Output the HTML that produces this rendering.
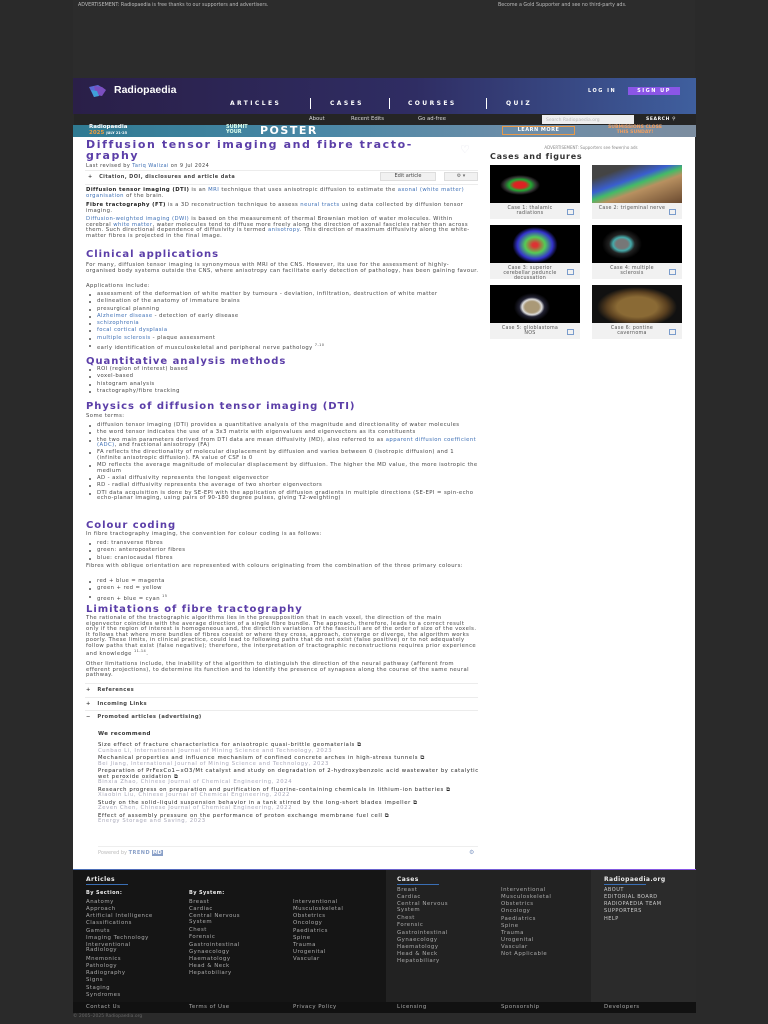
<!DOCTYPE html>
<html><head><meta charset="utf-8">
<style>
*{margin:0;padding:0;box-sizing:border-box}
body{width:768px;height:1024px;background:#2a2a2a;font-family:"DejaVu Sans","Liberation Sans",sans-serif;position:relative;overflow:hidden;color:#333}
.a{position:absolute}
.t{font-size:5.3px;line-height:5.5px;color:#444;letter-spacing:.42px}
.t a,.lk{color:#3d6fb5;text-decoration:none}
h2{position:absolute;left:86px;font-size:10px;font-weight:bold;color:#5b3ea8;letter-spacing:.95px;line-height:11px}
ul{list-style:none}
ul li{position:relative;padding-left:11px;margin-bottom:1.8px}
ul li:before{content:"";position:absolute;left:3px;top:2px;width:2px;height:2px;background:#555;border-radius:1px}
.thumb{position:absolute;width:90px;background:#f1f1f1}
.thumb .img{height:38px;background:#111}
.thumb .cap{font-size:4.8px;line-height:5.2px;color:#555;text-align:center;padding:3px 16px 0 6px;height:16px;position:relative;letter-spacing:.3px}
.thumb .cap:after{content:"";position:absolute;right:6px;top:6px;width:5px;height:4px;border:1px solid #7a9ccc}
.fh{font-size:6px;font-weight:bold;color:#eee;position:absolute;letter-spacing:.4px}
.ful{position:absolute;height:1px;background:#3a6fb5;width:42px}
.fl{position:absolute;font-size:5.4px;line-height:7.15px;color:#aaa;letter-spacing:.5px}
.coll{position:absolute;left:86px;font-size:5.2px;font-weight:bold;color:#444;letter-spacing:.4px}
.hr{position:absolute;left:85px;width:393px;height:1px;background:#ececec}
.rec{font-size:5.3px;line-height:5.5px;color:#222;margin-bottom:1px;letter-spacing:.6px}
.rec i{font-style:normal;color:#aab;display:block;margin-bottom:2px}
</style></head><body>
<div class="a" style="left:73px;top:0;width:622px;height:78px;background:#2c2c2c"></div>
<div class="a" style="left:78px;top:3px;font-size:4.8px;color:#bbb">ADVERTISEMENT: Radiopaedia is free thanks to our supporters and advertisers.</div>
<div class="a" style="left:498px;top:3px;font-size:4.8px;color:#bbb">Become a Gold Supporter and see no third-party ads.</div>
<div class="a" style="left:73px;top:78px;width:623px;height:36px;background:linear-gradient(90deg,#2a1f48,#2f2d63 55%,#3f5f9e)"></div>
<svg class="a" style="left:88px;top:84px" width="24" height="14" viewBox="0 0 24 14"><path d="M1 3l9-2 5 3-2 7-7 2z" fill="#5a6ad6"/><path d="M6 2l8 1 4 3-4 6-6-1z" fill="#7b4fc0"/><path d="M3 6l6 1 2 5-5 1z" fill="#3fa0d8"/></svg>
<div class="a" style="left:114px;top:84px;font-size:10.5px;font-weight:bold;color:#fff;font-family:'Liberation Sans',sans-serif">Radiopaedia</div>
<div class="a" style="left:588px;top:88px;font-size:5px;letter-spacing:1.5px;color:#fff;font-weight:bold">LOG IN</div>
<div class="a" style="left:628px;top:87px;width:52px;height:8px;background:#8a56e6;font-size:5px;letter-spacing:1.5px;color:#fff;font-weight:bold;text-align:center;line-height:8px">SIGN UP</div>
<div class="a" style="left:230px;top:100px;font-size:6px;letter-spacing:2.4px;color:#fff;font-weight:bold">ARTICLES</div>
<div class="a" style="left:310px;top:98px;width:1px;height:11px;background:#fff"></div>
<div class="a" style="left:330px;top:100px;font-size:6px;letter-spacing:2.4px;color:#fff;font-weight:bold">CASES</div>
<div class="a" style="left:389px;top:98px;width:1px;height:11px;background:#fff"></div>
<div class="a" style="left:408px;top:100px;font-size:6px;letter-spacing:2.4px;color:#fff;font-weight:bold">COURSES</div>
<div class="a" style="left:486px;top:98px;width:1px;height:11px;background:#fff"></div>
<div class="a" style="left:506px;top:100px;font-size:6px;letter-spacing:2.4px;color:#fff;font-weight:bold">QUIZ</div>
<div class="a" style="left:74px;top:114px;width:622px;height:11px;background:#252525"></div>
<div class="a" style="left:309px;top:116px;font-size:5.3px;color:#ddd">About</div>
<div class="a" style="left:351px;top:116px;font-size:5.3px;color:#ddd">Recent Edits</div>
<div class="a" style="left:418px;top:116px;font-size:5.3px;color:#ddd">Go ad-free</div>
<div class="a" style="left:542px;top:115px;width:92px;height:9px;background:#eee;font-size:4.5px;color:#bbb;padding:2.5px 4px">Search Radiopaedia.org</div>
<div class="a" style="left:646px;top:117px;font-size:4.5px;font-weight:bold;color:#fff;letter-spacing:.6px">SEARCH &#9906;</div>
<div class="a" style="left:73px;top:125px;width:623px;height:12px;background:linear-gradient(90deg,#2f7a92,#4a88a6 40%,#6b8da8 70%,#7c8da0)"></div>
<div class="a" style="left:89px;top:125px;font-size:5.5px;font-weight:bold;color:#fff;line-height:5.5px">Radiopaedia<br><span style="color:#f0a040">2025</span> <span style="font-size:3.5px">JULY 21-25</span></div>
<div class="a" style="left:226px;top:125px;font-size:5px;font-weight:bold;color:#dfe;line-height:4.6px">SUBMIT<br>YOUR</div>
<div class="a" style="left:260px;top:124px;font-size:11px;font-weight:bold;color:#fff;letter-spacing:1.5px">POSTER</div>
<div class="a" style="left:502px;top:126px;width:73px;height:9px;border:1px solid #e89a4a;font-size:5px;font-weight:bold;color:#fff;text-align:center;line-height:7px;letter-spacing:.5px">LEARN MORE</div>
<div class="a" style="left:582px;top:126px;width:106px;font-size:4.6px;font-weight:bold;color:#f4a060;text-align:center;line-height:4.8px">SUBMISSIONS CLOSE<br>THIS SUNDAY!</div>
<div class="a" style="left:73px;top:137px;width:622px;height:733px;background:#fff"></div>
<div class="a" style="left:86px;top:140px;width:380px;font-size:11px;line-height:10.5px;font-weight:bold;color:#5b3ea8;letter-spacing:1.6px;white-space:nowrap">Diffusion tensor imaging and fibre tracto-<br>graphy</div>
<div class="a" style="left:460px;top:143px;width:16px;height:10px;color:#e6e6ee;font-size:11px">&#9825;</div>
<div class="a t" style="left:86px;top:164px;font-size:5px">Last revised by <a>Tariq Walizai</a> on 9 Jul 2024</div>
<div class="hr" style="top:170px"></div>
<div class="a t" style="left:88px;top:175px;font-size:5px;font-weight:bold">+ &nbsp; Citation, DOI, disclosures and article data</div>
<div class="a" style="left:380px;top:172px;width:56px;height:9px;background:#f1f1f1;border:1px solid #ddd;font-size:5px;color:#444;text-align:center;line-height:7px">Edit article</div>
<div class="a" style="left:444px;top:172px;width:34px;height:9px;background:#f1f1f1;border:1px solid #ddd;font-size:5px;color:#666;text-align:center;line-height:7px">&#9881; &#9662;</div>
<div class="hr" style="top:184px"></div>

<div class="a t" style="left:86px;top:188px;width:393px"><b style="color:#222">Diffusion tensor imaging (DTI)</b> is an <a>MRI</a> technique that uses anisotropic diffusion to estimate the <a>axonal (white matter) organisation</a> of the brain.</div>
<div class="a t" style="left:86px;top:203px;width:393px"><b style="color:#222">Fibre tractography (FT)</b> is a 3D reconstruction technique to assess <a>neural tracts</a> using data collected by diffusion tensor imaging.</div>
<div class="a t" style="left:86px;top:217px;width:393px"><a>Diffusion-weighted imaging (DWI)</a> is based on the measurement of thermal Brownian motion of water molecules. Within cerebral <a>white matter</a>, water molecules tend to diffuse more freely along the direction of axonal fascicles rather than across them. Such directional dependence of diffusivity is termed <a>anisotropy</a>. This direction of maximum diffusivity along the white-matter fibres is projected in the final image.</div>

<h2 style="top:249px">Clinical applications</h2>
<div class="a t" style="left:86px;top:263px;width:393px">For many, diffusion tensor imaging is synonymous with MRI of the CNS. However, its use for the assessment of highly-organised body systems outside the CNS, where anisotropy can facilitate early detection of pathology, has been gaining favour.</div>
<div class="a t" style="left:86px;top:284px">Applications include:</div>
<ul class="a t" style="left:86px;top:292px;width:393px">
<li>assessment of the deformation of white matter by tumours - deviation, infiltration, destruction of white matter</li>
<li>delineation of the anatomy of immature brains</li>
<li>presurgical planning</li>
<li><a>Alzheimer disease</a> - detection of early disease</li>
<li><a>schizophrenia</a></li>
<li><a>focal cortical dysplasia</a></li>
<li><a>multiple sclerosis</a> - plaque assessment</li>
<li>early identification of musculoskeletal and peripheral nerve pathology <sup style="font-size:3.5px">7-10</sup></li>
</ul>
<h2 style="top:356px">Quantitative analysis methods</h2>
<ul class="a t" style="left:86px;top:367px;width:393px">
<li>ROI (region of interest) based</li><li>voxel-based</li><li>histogram analysis</li><li>tractography/fibre tracking</li>
</ul>
<h2 style="top:401px">Physics of diffusion tensor imaging (DTI)</h2>
<div class="a t" style="left:86px;top:414px">Some terms:</div>
<ul class="a t" style="left:86px;top:423px;width:393px">
<li>diffusion tensor imaging (DTI) provides a quantitative analysis of the magnitude and directionality of water molecules</li>
<li>the word tensor indicates the use of a 3x3 matrix with eigenvalues and eigenvectors as its constituents</li>
<li>the two main parameters derived from DTI data are mean diffusivity (MD), also referred to as <a>apparent diffusion coefficient (ADC)</a>, and fractional anisotropy (FA)</li>
<li>FA reflects the directionality of molecular displacement by diffusion and varies between 0 (isotropic diffusion) and 1 (infinite anisotropic diffusion). FA value of CSF is 0</li>
<li>MD reflects the average magnitude of molecular displacement by diffusion. The higher the MD value, the more isotropic the medium</li>
<li>AD - axial diffusivity represents the longest eigenvector</li>
<li>RD - radial diffusivity represents the average of two shorter eigenvectors</li>
<li>DTI data acquisition is done by SE-EPI with the application of diffusion gradients in multiple directions (SE-EPI = spin-echo echo-planar imaging, using pairs of 90-180 degree pulses, giving T2-weighting)</li>
</ul>
<h2 style="top:520px">Colour coding</h2>
<div class="a t" style="left:86px;top:532px">In fibre tractography imaging, the convention for colour coding is as follows:</div>
<ul class="a t" style="left:86px;top:541px;width:393px">
<li>red: transverse fibres</li><li>green: anteroposterior fibres</li><li>blue: craniocaudal fibres</li>
</ul>
<div class="a t" style="left:86px;top:564px;width:393px">Fibres with oblique orientation are represented with colours originating from the combination of the three primary colours:</div>
<ul class="a t" style="left:86px;top:579px;width:393px">
<li>red + blue = magenta</li><li>green + red = yellow</li><li>green + blue = cyan <sup style="font-size:3.5px">15</sup></li>
</ul>
<h2 style="top:604px">Limitations of fibre tractography</h2>
<div class="a t" style="left:86px;top:616px;width:393px">The rationale of the tractographic algorithms lies in the presupposition that in each voxel, the direction of the main eigenvector coincides with the average direction of a single fibre bundle. The approach, therefore, leads to a correct result only if the region of interest is homogeneous and, the direction variations of the fasciculi are of the order of size of the voxels. It follows that where more bundles of fibres coexist or where they cross, approach, converge or diverge, the algorithm works poorly. These limits, in clinical practice, could lead to following paths that do not exist (false positive) or to not adequately follow paths that exist (false negative); therefore, the interpretation of tractographic reconstructions requires prior experience and knowledge <sup style="font-size:3.5px">11-14</sup>.</div>
<div class="a t" style="left:86px;top:662px;width:393px">Other limitations include, the inability of the algorithm to distinguish the direction of the neural pathway (afferent from efferent projections), to determine its function and to identify the presence of synapses along the course of the same neural pathway.</div>
<div class="hr" style="top:683px"></div>
<div class="coll" style="top:687px">+ &nbsp; References</div>
<div class="hr" style="top:697px"></div>
<div class="coll" style="top:701px">+ &nbsp; Incoming Links</div>
<div class="hr" style="top:710px"></div>
<div class="coll" style="top:714px">− &nbsp; Promoted articles (advertising)</div>
<div class="a" style="left:98px;top:731px;font-size:5.5px;font-weight:bold;color:#333;letter-spacing:.4px">We recommend</div>
<div class="a" style="left:98px;top:743px;width:385px">
<div class="rec">Size effect of fracture characteristics for anisotropic quasi-brittle geomaterials ⧉<i>Cunbao Li, International Journal of Mining Science and Technology, 2023</i></div>
<div class="rec">Mechanical properties and influence mechanism of confined concrete arches in high-stress tunnels ⧉<i>Bei Jiang, International Journal of Mining Science and Technology, 2023</i></div>
<div class="rec">Preparation of PrFexCo1−xO3/Mt catalyst and study on degradation of 2-hydroxybenzoic acid wastewater by catalytic wet peroxide oxidation ⧉<i>Binxia Zhao, Chinese Journal of Chemical Engineering, 2024</i></div>
<div class="rec">Research progress on preparation and purification of fluorine-containing chemicals in lithium-ion batteries ⧉<i>Xiaobin Liu, Chinese Journal of Chemical Engineering, 2022</i></div>
<div class="rec">Study on the solid–liquid suspension behavior in a tank stirred by the long-short blades impeller ⧉<i>Zeven Chen, Chinese Journal of Chemical Engineering, 2022</i></div>
<div class="rec">Effect of assembly pressure on the performance of proton exchange membrane fuel cell ⧉<i>Energy Storage and Saving, 2023</i></div>
</div>
<div class="a" style="left:98px;top:846px;width:380px;height:1px;background:#eee"></div>
<div class="a" style="left:98px;top:850px;font-size:5px;color:#bbb">Powered by <b style="color:#8aa0c8;letter-spacing:.5px">TREND</b> <b style="background:#8aa0c8;color:#fff;padding:0 1px">MD</b></div>
<div class="a" style="left:469px;top:849px;font-size:6px;color:#8aa0c8">⚙</div>

<div class="a" style="left:496px;top:145px;width:190px;text-align:center;font-size:4px;color:#888">ADVERTISEMENT: Supporters see fewer/no ads</div>
<div class="a" style="left:490px;top:152px;font-size:8px;font-weight:bold;color:#333;letter-spacing:.7px">Cases and figures</div>
<div class="thumb" style="left:490px;top:165px"><div class="img" style="background:radial-gradient(ellipse 20px 10px at 30px 20px,#d22 30%,#2a3 55%,#333 80%,#000)"></div><div class="cap">Case 1: thalamic radiations</div></div>
<div class="thumb" style="left:592px;top:165px"><div class="img" style="background:linear-gradient(160deg,#444 20%,#3a5fd0 40%,#4b6 50%,#b89060 60%,#6a4a30)"></div><div class="cap">Case 2: trigeminal nerve</div></div>
<div class="thumb" style="left:490px;top:225px"><div class="img" style="background:radial-gradient(ellipse 25px 20px at 45px 20px,#d33 10%,#5c5 40%,#33c 70%,#000 90%)"></div><div class="cap">Case 3: superior cerebellar peduncle decussation</div></div>
<div class="thumb" style="left:592px;top:225px"><div class="img" style="background:radial-gradient(ellipse 20px 15px at 30px 19px,#777 30%,#4aa 45%,#222 65%,#000)"></div><div class="cap">Case 4: multiple sclerosis</div></div>
<div class="thumb" style="left:490px;top:285px"><div class="img" style="background:radial-gradient(ellipse 18px 14px at 42px 22px,#a97 40%,#ddd 55%,#223 70%,#000)"></div><div class="cap">Case 5: glioblastoma NOS</div></div>
<div class="thumb" style="left:592px;top:285px"><div class="img" style="background:radial-gradient(ellipse 40px 20px at 45px 22px,#8a6a35 50%,#5a4020 75%,#111)"></div><div class="cap">Case 6: pontine cavernoma</div></div>

<div class="a" style="left:73px;top:869px;width:623px;height:1px;background:linear-gradient(90deg,#4a6fb5,#8a56e6)"></div>
<div class="a" style="left:73px;top:870px;width:313px;height:132px;background:#151515"></div>
<div class="a" style="left:386px;top:870px;width:205px;height:132px;background:#222"></div>
<div class="a" style="left:591px;top:870px;width:105px;height:132px;background:#2b2b2b"></div>
<div class="a" style="left:73px;top:1002px;width:623px;height:11px;background:#111"></div>
<div class="fh" style="left:86px;top:876px">Articles</div><div class="ful" style="left:86px;top:884px"></div>
<div class="fh" style="left:397px;top:876px">Cases</div><div class="ful" style="left:397px;top:884px"></div>
<div class="fh" style="left:604px;top:876px">Radiopaedia.org</div><div class="ful" style="left:604px;top:884px"></div>
<div class="fh" style="left:86px;top:890px;font-size:5px">By Section:</div>
<div class="fh" style="left:189px;top:890px;font-size:5px">By System:</div>
<div class="fl" style="left:86px;top:899px">Anatomy<br>Approach<br>Artificial Intelligence<br>Classifications<br>Gamuts<br>Imaging Technology<br><span style="line-height:5.5px;display:inline-block;padding:1px 0 2px">Interventional<br>Radiology</span><br>Mnemonics<br>Pathology<br>Radiography<br>Signs<br>Staging<br>Syndromes</div>
<div class="fl" style="left:189px;top:899px">Breast<br>Cardiac<br><span style="line-height:5.5px;display:inline-block;padding:1px 0 2px">Central Nervous<br>System</span><br>Chest<br>Forensic<br>Gastrointestinal<br>Gynaecology<br>Haematology<br>Head &amp; Neck<br>Hepatobiliary</div>
<div class="fl" style="left:293px;top:899px">Interventional<br>Musculoskeletal<br>Obstetrics<br>Oncology<br>Paediatrics<br>Spine<br>Trauma<br>Urogenital<br>Vascular</div>
<div class="fl" style="left:397px;top:887px">Breast<br>Cardiac<br><span style="line-height:5.5px;display:inline-block;padding:1px 0 2px">Central Nervous<br>System</span><br>Chest<br>Forensic<br>Gastrointestinal<br>Gynaecology<br>Haematology<br>Head &amp; Neck<br>Hepatobiliary</div>
<div class="fl" style="left:501px;top:887px">Interventional<br>Musculoskeletal<br>Obstetrics<br>Oncology<br>Paediatrics<br>Spine<br>Trauma<br>Urogenital<br>Vascular<br>Not Applicable</div>
<div class="fl" style="left:604px;top:887px;color:#ccc;letter-spacing:.5px;font-size:5px">ABOUT<br>EDITORIAL BOARD<br>RADIOPAEDIA TEAM<br>SUPPORTERS<br>HELP</div>
<div class="fl" style="left:86px;top:1004px">Contact Us</div>
<div class="fl" style="left:189px;top:1004px">Terms of Use</div>
<div class="fl" style="left:293px;top:1004px">Privacy Policy</div>
<div class="fl" style="left:397px;top:1004px">Licensing</div>
<div class="fl" style="left:501px;top:1004px">Sponsorship</div>
<div class="fl" style="left:604px;top:1004px">Developers</div>
<div class="a" style="left:73px;top:1014px;font-size:4.5px;color:#666">© 2005–2025 Radiopaedia.org</div>
</body></html>
